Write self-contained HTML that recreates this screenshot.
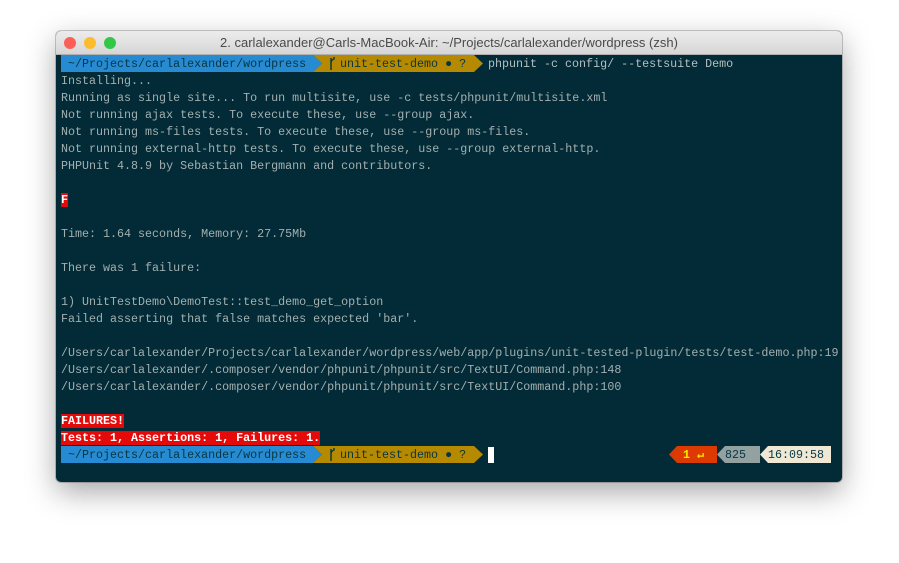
<!DOCTYPE html>
<html><head><meta charset="utf-8"><style>
body{margin:0;width:899px;height:563px;background:#fff;position:relative;overflow:hidden;font-family:"Liberation Mono",monospace}
.win{position:absolute;left:56px;top:31px;width:786px;height:451px;border-radius:5px;background:#022b37;box-shadow:0 10px 30px rgba(0,0,0,.35),0 0 0 1px rgba(0,0,0,.2);overflow:hidden}
.tb{position:absolute;left:0;top:0;width:100%;height:23px;background:linear-gradient(#ececec,#d6d6d6);border-bottom:1px solid #b0b0b0;font-family:"Liberation Sans",sans-serif;font-size:13px;color:#4a4a4a;text-align:center;line-height:24px}
.d{position:absolute;top:6px;width:12px;height:12px;border-radius:50%}
pre{position:absolute;left:5px;top:25px;margin:0;font-size:11.68px;line-height:17px;color:#a3afaf;font-family:"Liberation Mono",monospace}
.r{background:#e50a0a;color:#fff;font-weight:bold}
.seg{position:absolute;height:17px;line-height:17px;font-size:11.68px;color:#073642;white-space:pre}
</style></head><body>
<div class="win">
<div class="tb"><div class="d" style="left:8px;background:#fc5f57"></div><div class="d" style="left:28px;background:#fdbc2e"></div><div class="d" style="left:48px;background:#33c748"></div>2. carlalexander@Carls-MacBook-Air: ~/Projects/carlalexander/wordpress (zsh)</div>
<pre> 
Installing...
Running as single site... To run multisite, use -c tests/phpunit/multisite.xml
Not running ajax tests. To execute these, use --group ajax.
Not running ms-files tests. To execute these, use --group ms-files.
Not running external-http tests. To execute these, use --group external-http.
PHPUnit 4.8.9 by Sebastian Bergmann and contributors.

<span class="r">F</span>

Time: 1.64 seconds, Memory: 27.75Mb

There was 1 failure:

1) UnitTestDemo\DemoTest::test_demo_get_option
Failed asserting that false matches expected 'bar'.

/Users/carlalexander/Projects/carlalexander/wordpress/web/app/plugins/unit-tested-plugin/tests/test-demo.php:19
/Users/carlalexander/.composer/vendor/phpunit/phpunit/src/TextUI/Command.php:148
/Users/carlalexander/.composer/vendor/phpunit/phpunit/src/TextUI/Command.php:100

<span class="r">FAILURES!</span>
<span class="r">Tests: 1, Assertions: 1, Failures: 1.</span>
</pre>
</div>
<svg style="position:absolute;left:0;top:0" width="899" height="563">
<g><polygon points="61,55 313,55 322,63.5 313,72 61,72" fill="#268bd2"/>
<polygon points="313,55 474,55 483,63.5 474,72 313,72 322,63.5" fill="#b58900"/>
<polygon points="61,446 313,446 322,454.5 313,463 61,463" fill="#268bd2"/>
<polygon points="313,446 474,446 483,454.5 474,463 313,463 322,454.5" fill="#b58900"/>
<path d="M331,58 V70 M331,63 Q331,60 334,59 V57" stroke="#073642" stroke-width="1.4" fill="none"/>
<path d="M331,449 V461 M331,454 Q331,451 334,450 V448" stroke="#073642" stroke-width="1.4" fill="none"/>
<rect x="488" y="447" width="6" height="16" fill="#fff"/>
<polygon points="677,446 717,446 717,463 677,463 669,454.5" fill="#dc3a00"/>
<polygon points="725,446 760,446 760,463 725,463 717,454.5" fill="#93a1a1"/>
<polygon points="768,446 831,446 831,463 768,463 760,454.5" fill="#eee8d5"/>
</g></svg>
<div class="seg" style="left:61px;top:56px"> ~/Projects/carlalexander/wordpress</div>
<div class="seg" style="left:340px;top:56px">unit-test-demo ● ?</div>
<div class="seg" style="left:488px;top:56px;color:#b4bfbf">phpunit -c config/ --testsuite Demo</div>
<div class="seg" style="left:61px;top:447px"> ~/Projects/carlalexander/wordpress</div>
<div class="seg" style="left:340px;top:447px">unit-test-demo ● ?</div>
<div class="seg" style="left:683px;top:447px;color:#ffea00;font-weight:bold">1 ↵</div>
<div class="seg" style="left:725px;top:447px">825</div>
<div class="seg" style="left:768px;top:447px">16:09:58</div>
</body></html>
